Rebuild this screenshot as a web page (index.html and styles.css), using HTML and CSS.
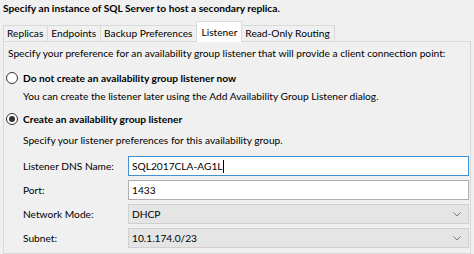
FILE: index.html
```html
<!DOCTYPE html>
<html lang="en">
<head>
    <meta charset="UTF-8">
    <title>Specify Replicas</title>
    <link rel="stylesheet" href="styles.css">
</head>
<body>
    <div class="page">
        <h1 class="title">Specify an instance of SQL Server to host a secondary replica.</h1>
        <div class="tabs">
            <div class="tab">Replicas</div>
            <div class="tab">Endpoints</div>
            <div class="tab">Backup Preferences</div>
            <div class="tab active">Listener</div>
            <div class="tab">Read-Only Routing</div>
        </div>
        <div class="panel">
            <p class="intro">Specify your preference for an availability group listener that will provide a client connection point:</p>

            <label class="option first">
                <span class="radio"></span>
                <span class="option-label">Do not create an availability group listener now</span>
            </label>
            <p class="hint">You can create the listener later using the Add Availability Group Listener dialog.</p>

            <label class="option second">
                <span class="radio checked"></span>
                <span class="option-label">Create an availability group listener</span>
            </label>
            <p class="hint">Specify your listener preferences for this availability group.</p>

            <div class="form">
                <div class="field-label">Listener DNS Name:</div>
                <div class="input focused">SQL2017CLA-AG1L<span class="caret"></span></div>
                <div class="field-label">Port:</div>
                <div class="input">1433</div>
                <div class="field-label">Network Mode:</div>
                <div class="input combo">DHCP
                    <svg class="chev" width="8" height="5" viewBox="0 0 8 5"><path d="M0.5 0.5 L4 4 L7.5 0.5" fill="none" stroke="#777" stroke-width="1"/></svg>
                </div>
                <div class="field-label">Subnet:</div>
                <div class="input combo">10.1.174.0/23
                    <svg class="chev" width="8" height="5" viewBox="0 0 8 5"><path d="M0.5 0.5 L4 4 L7.5 0.5" fill="none" stroke="#777" stroke-width="1"/></svg>
                </div>
            </div>
        </div>
    </div>
</body>
</html>
```

FILE: styles.css
```css
body {
    margin: 0;
    background: #f0f0f0;
    font-family: Lato, "Noto Sans", sans-serif;
    font-size: 10.2px;
    color: #000;
}
.page {
    width: 474px;
    height: 254px;
    overflow: hidden;
    padding-left: 3px;
    box-sizing: border-box;
}
.title {
    margin: 0;
    padding: 1px 0 0 0;
    height: 21px;
    box-sizing: border-box;
    font-size: 10.2px;
    font-weight: bold;
    line-height: 14px;
}
.tabs {
    display: flex;
    align-items: flex-end;
    height: 20px;
}
.tab {
    height: 16px;
    line-height: 15px;
    padding: 0 4px 0 3px;
    border: 1px solid #d9d9d9;
    border-bottom: none;
    margin-right: -1px;
    box-sizing: border-box;
    background: #f0f0f0;
}
.tab.active {
    position: relative;
    z-index: 1;
    height: 21px;
    margin-bottom: -1px;
    padding: 0 4px;
    line-height: 20px;
    background: #fff;
}
.panel {
    width: 468px;
    height: 213px;
    border: 1px solid #d9d9d9;
    box-sizing: border-box;
    padding: 4px 0 0 4px;
}
.intro {
    margin: 0;
    line-height: 14px;
    white-space: nowrap;
}
.option {
    display: flex;
    align-items: center;
    height: 14px;
    font-weight: bold;
}
.option.first {
    margin-top: 11px;
}
.option.second {
    margin-top: 9px;
}
.radio {
    width: 12px;
    height: 12px;
    border: 1px solid #333;
    border-radius: 50%;
    box-sizing: border-box;
    margin: 0 5px 0 -2px;
    background: #fff;
    display: flex;
    align-items: center;
    justify-content: center;
}
.radio.checked::after {
    content: "";
    width: 6px;
    height: 6px;
    border-radius: 50%;
    background: #333;
}
.hint {
    margin: 4px 0 0 15px;
    line-height: 14px;
}
.option.second + .hint {
    margin-top: 7px;
}
.form {
    display: grid;
    grid-template-columns: 105px 341px;
    row-gap: 4px;
    margin: 9px 0 0 15px;
    align-items: center;
}
.input {
    height: 20px;
    border: 1px solid #adadad;
    background: #fff;
    box-sizing: border-box;
    padding-left: 3px;
    display: flex;
    align-items: center;
}
.input.focused {
    border-color: #3f90d4;
}
.caret {
    width: 1px;
    height: 13px;
    background: #000;
}
.input.combo {
    background: #e5e5e5;
    border-color: #d0d0d0;
    justify-content: space-between;
    padding-right: 7px;
}
```
